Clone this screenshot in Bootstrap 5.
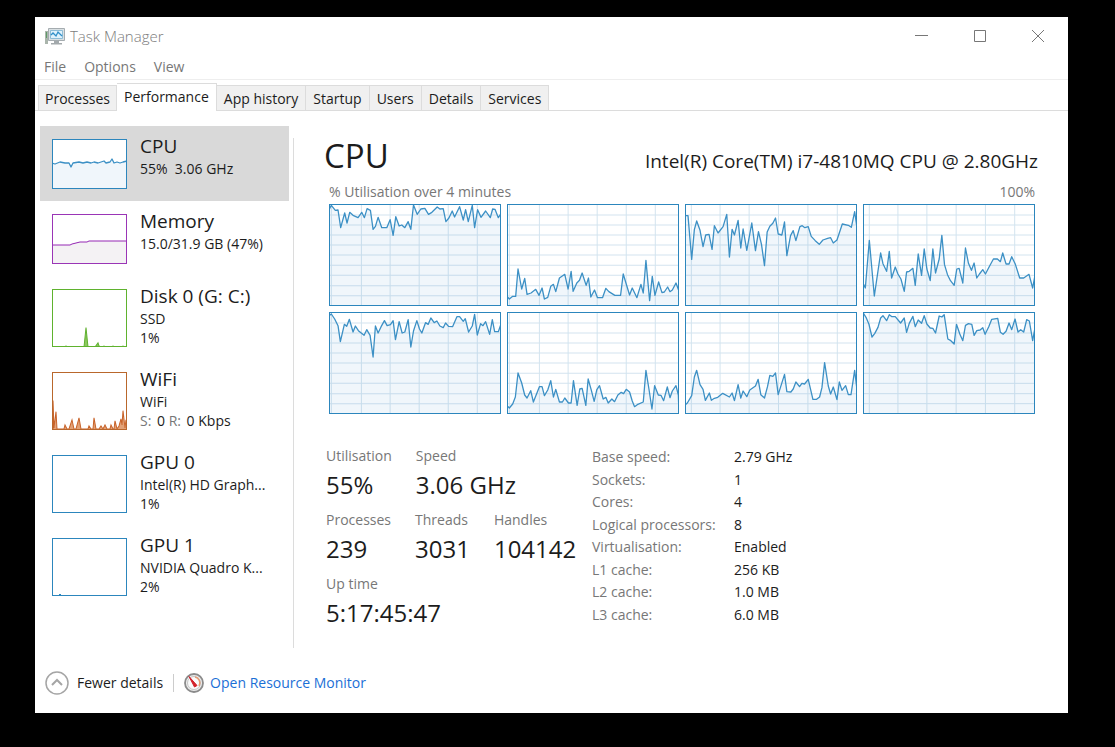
<!DOCTYPE html>
<html lang="en">
<head>
<meta charset="utf-8">
<meta name="viewport" content="width=device-width, initial-scale=1">
<title>Task Manager</title>
<link href="https://cdn.jsdelivr.net/npm/bootstrap@5.3.0/dist/css/bootstrap.min.css" rel="stylesheet">
<style>
  body { background: #000; color: #1c1c1c; font-family: "Open Sans", "Noto Sans", sans-serif; font-size: 14px; line-height: 20px; padding: 17px 47px 34px 35px; min-height: 100vh; }
  button { color: inherit; background: none; border: 0; padding: 0; text-align: left; }
  .tm-window { background: #fff; flex: 1; }
  .title-bar { height: 38px; padding: 0 1px 0 10px; color: #7c7c7c; font-size: 15px; font-weight: 300; }
  .title-bar .app-name { padding-left: 5px; }
  .win-btn { width: 58px; height: 38px; color: #777; }
  .menu-bar { height: 25px; padding: 0 9px; gap: 18px; color: #777; border-bottom: 1px solid #eee; }
  .tab-strip { height: 31px; padding-left: 3px; border-bottom: 1px solid #dcdcdc; }
  .tab-strip .nav-link { height: 25px; padding: 1px 7px 0; border: 1px solid #dcdcdc; border-width: 1px 1px 0 0; border-radius: 0; background: #f0f0f0; color: #1c1c1c; }
  .tab-strip .nav-item:first-child .nav-link { border-left-width: 1px; padding: 1px 6px 0; }
  .tab-strip .nav-link.active { height: 28px; padding-bottom: 3px; background: #fff; color: #1c1c1c; margin-bottom: -1px; border-color: #dcdcdc; }
  .side-list { width: 249px; margin: 15px 4px 0 5px; }
  .side-item { display: flex; gap: 13px; padding: 13px 12px 12px; height: 83px; line-height: 19px; }
  .side-item.short { height: 75px; }
  .side-item.current { background: #d9d9d9; }
  .side-item svg { width: 75px; height: 100%; flex: none; }
  .side-name { font-size: 19px; line-height: 20px; margin: -3px 0 3px; }
  .soft { color: #777; margin-right: 2px; }
  .divider { width: 1px; background: #dcdcdc; margin: 27px 0 0; height: 510px; }
  .detail { padding: 25px 30px 0; }
  .detail h1 { font-size: 33px; line-height: 40px; font-weight: 400; }
  .cpu-model { font-size: 19px; line-height: 26px; }
  .core-grid { display: grid; grid-template-columns: repeat(4, 1fr); gap: 6px; }
  .core-grid svg { width: 100%; height: 102px; display: block; }
  .plot-inset { padding: 0 3px 0 5px; }
  .caption { font-size: 14px; line-height: 24px; color: #777; }
  svg * { vector-effect: non-scaling-stroke; }
  .frame { fill: none; stroke: #2c86bd; stroke-width: 2; }
  .trace { fill: rgba(60, 140, 205, .08); stroke: #3c90c5; stroke-width: 1.3; stroke-linejoin: round; }
  .mesh { fill: none; stroke: #d3e4ef; stroke-width: 1; }
  .summary { padding: 32px 0 0 2px; }
  .stats { width: 266px; }
  .stat-row { height: 64px; gap: 24px; }
  .stat-row dt, .spec-table th { font-weight: 400; color: #777; }
  .stat-row dd { margin: 0; font-size: 24px; line-height: 38px; }
  .spec-table { height: 180px; }
  .spec-table th { width: 142px; }
  .spec-table th, .spec-table td { padding: 0; white-space: nowrap; }
  .foot { padding: 22px 10px 18px; }
  .foot a { color: #1b6fd6; text-decoration: none; gap: 6px; }
  .foot-rule { width: 1px; height: 18px; background: #ccc; margin: 0 10px; }
</style>
<script src="https://cdn.jsdelivr.net/npm/bootstrap@5.3.0/dist/js/bootstrap.bundle.min.js"></script>
</head>
<body class="d-flex flex-column">
<svg width="0" height="0" class="position-absolute" aria-hidden="true">
  <defs>
    <path id="mesh-a" class="mesh" d="M20 13V319M110 13V319M196 13V319M283 13V319M370 13V319M457 13V319M13 46H528M13 76H528M13 106H528M13 136H528M13 166H528M13 197H528M13 227H528M13 258H528M13 288H528"/>
    <path id="mesh-b" class="mesh" d="M32 13V319M118 13V319M205 13V319M293 13V319M381 13V319M469 13V319M13 46H530M13 76H530M13 106H530M13 136H530M13 166H530M13 197H530M13 227H530M13 258H530M13 288H530"/>
  </defs>
</svg>
<div class="tm-window d-flex flex-column">
  <header class="title-bar d-flex align-items-center">
    <svg width="20" height="18" viewBox="0 0 20 18" aria-hidden="true"><path d="M0 4h3v13H0z" fill="#aab5ac"/><path d="M1 5h1v6H1z" fill="#5e9a67"/><path d="M3.500 1.500h16v12h-16z" fill="#d9e0e3" stroke="#a5acb0"/><path d="M5.500 3.500h12v8h-12z" fill="#dff2fc" stroke="#8dbcd6"/><path d="M6 8l2-2 3 3 2-4 4 4" fill="none" stroke="#2f8fc9" stroke-width="1.300"/><path d="M9 14h5v2h3v1.500H6V16h3z" fill="#a3a9ac"/></svg>
    <span class="app-name me-auto">Task Manager</span>
    <button class="win-btn" aria-label="Minimise"><svg class="d-block mx-auto" width="14" height="14"><path d="M0 6.500h13" stroke="currentColor"/></svg></button>
    <button class="win-btn" aria-label="Maximise"><svg class="d-block mx-auto" width="14" height="14"><path d="M1.500 1.500h11v11h-11z" fill="none" stroke="currentColor"/></svg></button>
    <button class="win-btn" aria-label="Close"><svg class="d-block mx-auto" width="14" height="14"><path d="M1 1l12 12M13 1L1 13" stroke="currentColor"/></svg></button>
  </header>
  <nav class="menu-bar d-flex align-items-center"><button>File</button><button>Options</button><button>View</button></nav>
  <ul class="tab-strip nav align-items-end flex-nowrap">
    <li class="nav-item"><button class="nav-link">Processes</button></li>
    <li class="nav-item"><button class="nav-link active">Performance</button></li>
    <li class="nav-item"><button class="nav-link">App history</button></li>
    <li class="nav-item"><button class="nav-link">Startup</button></li>
    <li class="nav-item"><button class="nav-link">Users</button></li>
    <li class="nav-item"><button class="nav-link">Details</button></li>
    <li class="nav-item"><button class="nav-link">Services</button></li>
  </ul>
  <div class="d-flex flex-grow-1">
    <nav class="side-list d-flex flex-column flex-shrink-0">
      <button class="side-item short current">
        <svg viewBox="0 0 75 50" preserveAspectRatio="none"><path d="M0 0h75v50H0z" fill="#fff"/><path class="trace" d="M0 50V24l3 1 5-2 5 1 4 0 2 4 2-4 6-1 4 1 4-1 4 1 3-1 4 1 3-1 3-1 2 2 4-1 2-3 2 4 3-1 3 1 3-1 4-1V50z"/><path class="frame" d="M0 0h75v50H0z"/></svg>
        <span><span class="side-name d-block">CPU</span><span class="d-block">55%&nbsp; 3.06 GHz</span></span>
      </button>
      <button class="side-item short">
        <svg viewBox="0 0 75 50" preserveAspectRatio="none"><path d="M0 31H18l2-1 8-2h7l2-1H75V50H0z" fill="#f4f2f4" stroke="#9528b4"/><path class="frame" style="stroke:#9a35b6" d="M0 0h75v50H0z"/></svg>
        <span><span class="side-name d-block">Memory</span><span class="d-block">15.0/31.9 GB (47%)</span></span>
      </button>
      <button class="side-item">
        <svg viewBox="0 0 75 57" preserveAspectRatio="none"><path d="M12 57l2-1 2 1M32 57l2-19 2 19M43 57l3-4 1 3 2 1M51 57l1-1 1 1M60 57l1-1 1 1M70 57l1-1 1 1" fill="#8cc95e" stroke="#60b030"/><path class="frame" style="stroke:#5fb22e" d="M0 0h75v57H0z"/></svg>
        <span><span class="side-name d-block">Disk 0 (G: C:)</span><span class="d-block">SSD</span><span class="d-block">1%</span></span>
      </button>
      <button class="side-item">
        <svg viewBox="0 0 75 57" preserveAspectRatio="none"><path d="M1 57V28l1 27 2-16 1 17h7l1-4 2 4h2l3-9 2 9h2l3-11 2 11h7l1-3 2 3h2l1-11 2 11h3l2-3 2 3 2-4 2 4h3l1-4 2 4h1l1-8 2 8 2-3 2-7 1 6 1-14 2 17 1-8 2 7 1-8 2 6V57z" fill="#e2a277" stroke="#c8632a"/><path class="frame" style="stroke:#b9672c" d="M0 0h75v57H0z"/></svg>
        <span><span class="side-name d-block">WiFi</span><span class="d-block">WiFi</span><span class="d-block"><span class="soft">S:</span> 0 <span class="soft">R:</span> 0 Kbps</span></span>
      </button>
      <button class="side-item">
        <svg viewBox="0 0 75 57" preserveAspectRatio="none"><path class="frame" d="M0 0h75v57H0z"/></svg>
        <span><span class="side-name d-block">GPU 0</span><span class="d-block">Intel(R) HD Graph...</span><span class="d-block">1%</span></span>
      </button>
      <button class="side-item">
        <svg viewBox="0 0 75 57" preserveAspectRatio="none"><path class="frame" d="M0 0h75v57H0zM7 56h2"/></svg>
        <span><span class="side-name d-block">GPU 1</span><span class="d-block">NVIDIA Quadro K...</span><span class="d-block">2%</span></span>
      </button>
    </nav>
    <div class="divider flex-shrink-0"></div>
    <main class="detail flex-grow-1">
      <div class="d-flex justify-content-between align-items-baseline">
        <h1 class="mb-1">CPU</h1><span class="cpu-model">Intel(R) Core(TM) i7-4810MQ CPU @ 2.80GHz</span>
      </div>
      <div class="plot-inset">
        <div class="caption d-flex justify-content-between"><span>% Utilisation over 4 minutes</span><span>100%</span></div>
        <div class="core-grid">
          <svg viewBox="13 13 515 306" preserveAspectRatio="none"><use href="#mesh-a"/><polyline class="trace" points="13,318 13,30 20,17 32,32 40,31 48,84 60,40 67,70 75,38 85,47 100,54 111,38 119,54 127,27 137,32 145,89 152,80 160,53 171,84 186,84 196,60 205,107 213,51 223,79 231,76 240,84 250,66 258,89 266,16 277,44 288,28 300,26 311,44 321,38 337,22 345,28 355,27 363,66 372,55 382,34 389,52 404,21 415,61 422,30 430,66 442,17 449,84 458,30 468,53 482,34 496,54 503,28 510,29 520,54 528,42 528,318"/><path class="frame" d="M13 13h515v306H13z"/></svg>
          <svg viewBox="13 13 515 306" preserveAspectRatio="none"><use href="#mesh-a"/><polyline class="trace" points="13,318 13,290 20,298 30,290 39,290 46,208 57,268 66,236 73,284 85,280 99,269 109,287 118,265 125,298 135,293 144,260 152,254 159,276 170,235 186,224 196,268 205,215 211,275 222,250 230,242 238,220 250,257 257,235 264,292 275,271 284,294 299,294 309,266 318,276 336,287 353,287 361,223 380,286 388,265 402,294 414,254 421,280 429,182 440,303 448,230 456,287 467,247 477,279 484,277 494,262 501,276 508,271 519,250 527,272 528,318"/><path class="frame" d="M13 13h515v306H13z"/></svg>
          <svg viewBox="13 13 515 306" preserveAspectRatio="none"><use href="#mesh-b"/><polyline class="trace" points="13,318 13,48 22,48 33,179 41,90 48,64 58,92 67,141 75,106 85,104 94,149 101,78 112,100 127,81 138,44 146,172 154,89 161,106 172,62 180,145 187,88 198,152 213,70 224,153 233,96 242,134 251,198 259,97 267,80 276,71 284,55 292,103 303,106 311,67 318,168 329,108 337,93 345,123 357,81 364,78 372,84 382,81 391,110 403,123 415,134 426,121 440,116 449,114 457,130 468,121 484,73 502,77 511,83 521,36 528,84 528,318"/><path class="frame" d="M13 13h515v306H13z"/></svg>
          <svg viewBox="13 13 517 306" preserveAspectRatio="none"><use href="#mesh-b"/><polyline class="trace" points="13,318 13,250 20,265 32,122 47,289 66,160 73,192 84,215 92,155 99,235 110,202 118,223 127,238 137,275 144,217 152,215 163,206 170,257 179,163 189,227 197,148 205,208 215,243 223,148 231,220 242,178 250,107 258,195 267,225 276,243 287,257 295,208 302,206 313,250 321,145 330,191 339,212 347,190 355,235 363,223 373,210 381,223 392,202 405,178 417,178 426,186 433,160 443,193 452,193 460,171 471,194 484,235 496,235 512,224 523,265 530,226 530,318"/><path class="frame" d="M13 13h517v306H13z"/></svg>
          <svg viewBox="13 13 515 306" preserveAspectRatio="none"><use href="#mesh-a"/><polyline class="trace" points="13,318 13,24 20,19 30,34 40,54 47,102 59,50 66,56 74,35 85,73 92,55 101,69 118,83 126,66 136,83 145,148 152,55 160,76 169,57 179,39 187,54 197,51 205,39 212,96 223,42 232,76 240,73 250,36 258,118 266,70 276,39 284,64 291,76 302,45 310,50 318,31 328,45 336,40 345,55 355,60 362,46 371,56 383,57 396,27 404,27 415,41 421,33 431,73 442,55 449,20 457,82 467,48 474,54 482,42 494,80 502,36 509,72 520,72 527,52 528,318"/><path class="frame" d="M13 13h515v306H13z"/></svg>
          <svg viewBox="13 13 515 306" preserveAspectRatio="none"><use href="#mesh-a"/><polyline class="trace" points="13,318 13,294 20,301 30,289 38,268 46,196 57,226 66,262 73,271 84,249 92,283 110,237 118,237 125,264 135,247 144,219 152,268 159,245 170,283 179,283 186,271 197,286 205,286 212,219 223,293 231,244 238,242 249,293 256,214 265,246 274,281 282,246 290,234 301,274 309,269 316,286 327,274 335,282 345,262 355,254 362,258 370,245 380,253 388,280 395,297 403,291 421,283 429,188 438,244 447,304 455,234 466,262 474,263 482,279 493,238 501,270 508,250 519,234 526,262 528,318"/><path class="frame" d="M13 13h515v306H13z"/></svg>
          <svg viewBox="13 13 515 306" preserveAspectRatio="none"><use href="#mesh-b"/><polyline class="trace" points="13,318 13,292 20,286 33,264 41,208 48,188 58,231 67,245 74,278 86,256 92,278 101,272 111,269 126,257 146,268 154,256 161,279 172,231 180,271 187,250 198,267 207,247 224,235 232,215 240,261 251,271 260,237 267,203 276,206 284,196 292,261 311,200 318,252 330,253 337,244 345,223 356,237 363,227 371,229 382,215 396,275 407,275 416,268 423,240 431,165 442,235 449,259 457,238 468,276 475,223 483,248 494,234 502,261 510,261 521,188 528,246 528,318"/><path class="frame" d="M13 13h515v306H13z"/></svg>
          <svg viewBox="13 13 517 306" preserveAspectRatio="none"><use href="#mesh-b"/><polyline class="trace" points="13,318 13,15 22,29 31,50 40,88 48,78 58,59 66,31 73,24 84,39 92,21 100,27 110,27 126,46 137,31 144,74 152,47 163,26 170,57 179,37 189,47 197,24 205,49 215,61 223,62 231,76 242,25 250,28 257,21 268,94 277,99 287,109 294,50 304,79 313,99 321,53 330,48 340,50 347,83 355,69 365,67 373,60 380,80 391,57 400,35 418,32 426,74 434,80 443,71 452,46 460,66 470,34 479,73 487,66 496,73 505,36 513,40 523,99 530,60 530,318"/><path class="frame" d="M13 13h517v306H13z"/></svg>
        </div>
      </div>
      <div class="summary d-flex">
        <div class="stats flex-shrink-0">
          <dl class="stat-row d-flex mb-0"><div><dt>Utilisation</dt><dd>55%</dd></div><div><dt>Speed</dt><dd>3.06 GHz</dd></div></dl>
          <dl class="stat-row d-flex mb-0"><div><dt>Processes</dt><dd>239</dd></div><div><dt>Threads</dt><dd>3031</dd></div><div><dt>Handles</dt><dd>104142</dd></div></dl>
          <dl class="stat-row d-flex mb-0"><div><dt>Up time</dt><dd>5:17:45:47</dd></div></dl>
        </div>
        <table class="spec-table">
          <tr><th scope="row">Base speed:</th><td>2.79 GHz</td></tr>
          <tr><th scope="row">Sockets:</th><td>1</td></tr>
          <tr><th scope="row">Cores:</th><td>4</td></tr>
          <tr><th scope="row">Logical processors:</th><td>8</td></tr>
          <tr><th scope="row">Virtualisation:</th><td>Enabled</td></tr>
          <tr><th scope="row">L1 cache:</th><td>256 KB</td></tr>
          <tr><th scope="row">L2 cache:</th><td>1.0 MB</td></tr>
          <tr><th scope="row">L3 cache:</th><td>6.0 MB</td></tr>
        </table>
      </div>
    </main>
  </div>
  <footer class="foot d-flex align-items-center">
    <button class="d-flex align-items-center gap-2"><svg width="24" height="24" viewBox="0 0 24 24"><circle cx="12" cy="12" r="11" fill="#fff" stroke="#a5a5a5" stroke-width="1.500"/><path d="M7 14l5-5 5 5" fill="none" stroke="#a5a5a5" stroke-width="2"/></svg>Fewer details</button>
    <span class="foot-rule"></span>
    <a href="#" class="d-flex align-items-center"><svg width="20" height="20" viewBox="0 0 20 20"><circle cx="10" cy="10" r="9" fill="#ececec" stroke="#8b8b8b" stroke-width="1.800"/><circle cx="10" cy="10" r="6.500" fill="#fafafa" stroke="#c5c5c5"/><path d="M11 4a6 6 0 0 1 4 9" fill="none" stroke="#e59a72" stroke-width="1.500"/><path d="M5 3.500l8 9-2.500 1.500z" fill="#d4202a" stroke="#d4202a"/></svg>Open Resource Monitor</a>
  </footer>
</div>
</body>
</html>
